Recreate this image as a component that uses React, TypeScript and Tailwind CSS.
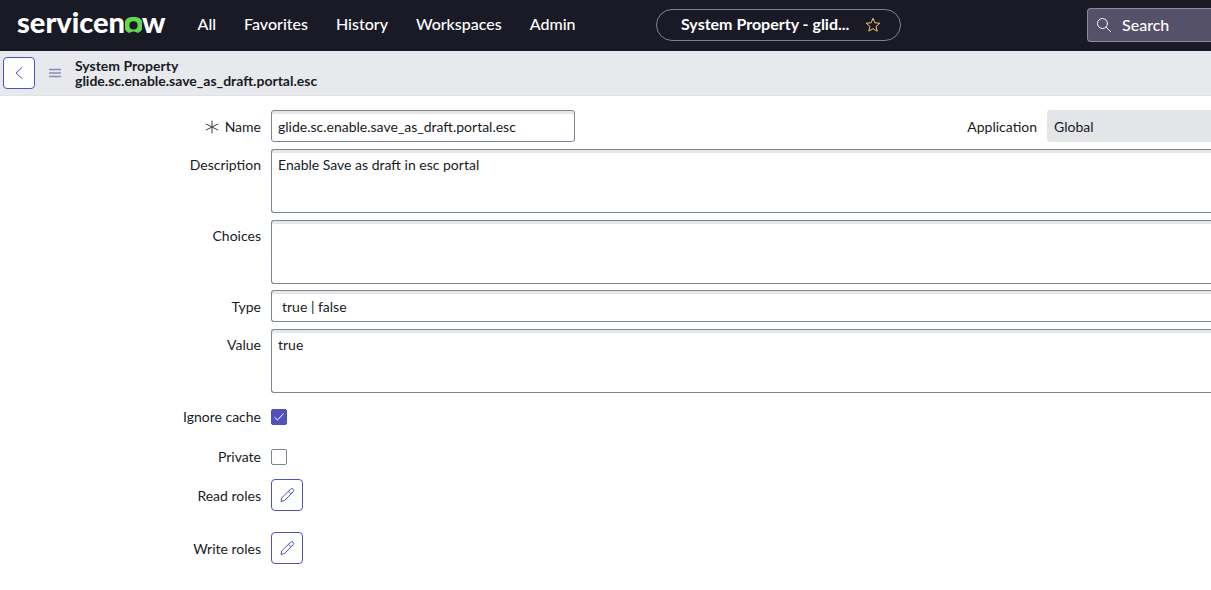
import type { ReactNode } from "react";

const navItems = ["All", "Favorites", "History", "Workspaces", "Admin"];

const fieldStyle =
  "border-[#7c8594] bg-white text-[#181b24] shadow-[inset_0_3px_0_#e6e8e8] outline-none focus:border-[#4f52bd]";

interface FormRowProps {
  label: string;
  htmlFor: string;
  required?: boolean;
  alignTop?: boolean;
  children: ReactNode;
}

function FormRow({ label, htmlFor, required, alignTop, children }: FormRowProps) {
  return (
    <div className="flex items-start gap-2.5">
      <label
        htmlFor={htmlFor}
        className={`flex h-8 w-[261px] shrink-0 items-center justify-end gap-1.5 ${alignTop ? "" : "pt-0.5"}`}
      >
        {required && <AsteriskIcon />}
        {label}
      </label>
      {children}
    </div>
  );
}

function AsteriskIcon() {
  return (
    <svg className="h-3.5 w-3.5" viewBox="0 0 14 14" fill="none" stroke="#3b3f4a" strokeLinecap="round">
      <path d="M7 1v12M1.2 4l11.6 6M1.2 10l11.6-6" />
    </svg>
  );
}

function PencilIcon() {
  return (
    <svg className="h-4 w-4" viewBox="0 0 16 16" fill="none" stroke="#4f52bd" strokeLinejoin="round">
      <path d="M2 14.500l.7-3.500 8.900-8.900a1.700 1.700 0 0 1 2.400 0l.2.2a1.700 1.700 0 0 1 0 2.400L5.400 13.600z" />
      <path d="M10.500 3.200a1.800 1.800 0 0 0 2.600 2.600" strokeWidth=".8" />
    </svg>
  );
}

function Logo() {
  return (
    <a href="#" aria-label="servicenow" className="flex items-baseline pb-1.5 text-[29px] leading-8 font-black text-white">
      servicen
      <svg className="h-4 w-[17px]" viewBox="0 0 17 16">
        <path
          fill="#62d84e"
          d="M8.500 0A8.300 8.300 0 0 0 3.200 15.500c.6.500 1.300.5 1.900.1a6 6 0 0 1 6.800 0c.6.4 1.300.4 1.900-.1A8.300 8.300 0 0 0 8.500 0zM8.500 12.500a4.100 4.100 0 1 1 0-8.200 4.100 4.100 0 0 1 0 8.200z"
        />
      </svg>
      w
    </a>
  );
}

function TopNav() {
  return (
    <header className="flex h-[51px] items-center bg-[#1a1a26] pb-px pl-[17px] text-base text-white">
      <Logo />
      <nav className="ml-8 flex gap-7 pb-0.5">
        {navItems.map((item) => (
          <a key={item} href="#" className="font-medium">
            {item}
          </a>
        ))}
      </nav>
      <div className="mr-[186px] ml-auto flex h-8 w-[245px] items-center justify-between rounded-full border border-[#82828f] pr-[19px] pl-6">
        <span className="pb-0.5 font-bold">System Property - glid...</span>
        <button type="button" aria-label="Add to favorites">
          <svg className="h-4 w-4" viewBox="0 0 16 16" fill="none" stroke="#f3c969" strokeLinejoin="round">
            <path d="M8 1.300l1.900 4.500 4.900.4-3.700 3.200 1.100 4.800L8 11.700l-4.200 2.500 1.100-4.800L1.200 6.200l4.900-.4z" />
          </svg>
        </button>
      </div>
      <label className="flex h-[34px] w-[124px] items-center gap-2.5 rounded-l border border-r-0 border-[#8c8a9c] bg-[#55516a] pl-2">
        <svg className="h-4 w-4 shrink-0" viewBox="0 0 16 16" fill="none" stroke="white" strokeLinecap="round">
          <circle cx="6.500" cy="6.500" r="5" />
          <path d="M10.200 10.200l4.600 4.600" />
        </svg>
        <input
          type="text"
          aria-label="Search"
          placeholder="Search"
          className="w-full min-w-0 bg-transparent font-medium outline-none placeholder:text-white"
        />
      </label>
    </header>
  );
}

function RecordHeader() {
  return (
    <div className="flex h-[45px] items-center border-b border-[#e1e2e6] bg-[#e8e9ed] pl-[3px]">
      <button
        type="button"
        aria-label="Back"
        className="flex h-8 w-8 items-center justify-center rounded border border-[#4f52bd] bg-white"
      >
        <svg className="h-4 w-4" viewBox="0 0 16 16" fill="none" stroke="#4f52bd" strokeLinecap="round">
          <path d="M11 2.500L5 8l6 5.500" />
        </svg>
      </button>
      <button type="button" aria-label="Additional actions" className="ml-3.5">
        <svg className="h-3 w-3" viewBox="0 0 12 12" stroke="#8a8cb4" strokeWidth="1.300">
          <path d="M0 2.500h12M0 6h12M0 9.500h12" />
        </svg>
      </button>
      <h1 className="ml-3.5 text-sm leading-[15px] font-bold text-[#181b24]">
        System Property
        <span className="block">glide.sc.enable.save_as_draft.portal.esc</span>
      </h1>
    </div>
  );
}

function Checkbox({ id, defaultChecked }: { id: string; defaultChecked?: boolean }) {
  return (
    <span className="relative mt-2 h-4 w-4">
      <input
        id={id}
        type="checkbox"
        defaultChecked={defaultChecked}
        className="peer block h-4 w-4 appearance-none rounded-xs border border-[#7c8594] bg-white checked:border-[#4f52bd] checked:bg-[#4f52bd]"
      />
      <svg
        className="pointer-events-none absolute inset-0 hidden h-4 w-4 peer-checked:block"
        viewBox="0 0 16 16"
        fill="none"
        stroke="white"
      >
        <path d="M3.500 8.200l3 2.800 6-6.500" />
      </svg>
    </span>
  );
}

function EditButton({ id, label }: { id: string; label: string }) {
  return (
    <button
      id={id}
      type="button"
      aria-label={label}
      className="flex h-8 w-8 items-center justify-center rounded border border-[#4f52bd] bg-white"
    >
      <PencilIcon />
    </button>
  );
}

function PropertyForm() {
  const areaStyle = `${fieldStyle} block h-16 min-w-0 flex-1 resize-none rounded-l-[3px] border border-r-0 px-1.5 pt-[5px] leading-5`;

  return (
    <form className="pt-3.5 text-sm text-[#181b24]">
      <div className="flex flex-col gap-[7px]">
        <div className="flex justify-between">
          <FormRow label="Name" htmlFor="name" required>
            <input
              id="name"
              type="text"
              defaultValue="glide.sc.enable.save_as_draft.portal.esc"
              className={`${fieldStyle} h-8 w-[304px] rounded-[3px] border px-1.5`}
            />
          </FormRow>
          <div className="flex gap-2.5">
            <label htmlFor="application" className="flex h-8 items-center pt-0.5">
              Application
            </label>
            <input
              id="application"
              type="text"
              readOnly
              defaultValue="Global"
              className="h-8 w-[164px] rounded-l-[3px] bg-[#e4e5e9] px-[7px] outline-none"
            />
          </div>
        </div>
        <FormRow label="Description" htmlFor="description" alignTop>
          <textarea id="description" defaultValue="Enable Save as draft in esc portal" className={areaStyle} />
        </FormRow>
        <FormRow label="Choices" htmlFor="choices" alignTop>
          <textarea id="choices" className={areaStyle} />
        </FormRow>
      </div>

      <div className="mt-1.5 flex flex-col gap-[7px]">
        <FormRow label="Type" htmlFor="type">
          <select
            id="type"
            className={`${fieldStyle} h-8 min-w-0 flex-1 appearance-none rounded-l-[3px] border border-r-0 px-2.5 pt-0.5`}
          >
            <option>true | false</option>
          </select>
        </FormRow>
        <FormRow label="Value" htmlFor="value" alignTop>
          <textarea id="value" defaultValue="true" className={areaStyle} />
        </FormRow>
      </div>

      <div className="mt-2 flex flex-col gap-2">
        <FormRow label="Ignore cache" htmlFor="ignore-cache" alignTop>
          <Checkbox id="ignore-cache" defaultChecked />
        </FormRow>
        <FormRow label="Private" htmlFor="private" alignTop>
          <Checkbox id="private" />
        </FormRow>
      </div>

      <div className="mt-1.5 flex flex-col gap-[21px]">
        <FormRow label="Read roles" htmlFor="read-roles">
          <EditButton id="read-roles" label="Edit read roles" />
        </FormRow>
        <FormRow label="Write roles" htmlFor="write-roles">
          <EditButton id="write-roles" label="Edit write roles" />
        </FormRow>
      </div>
    </form>
  );
}

export default function App() {
  return (
    <div className="min-h-screen bg-white font-['Lato',sans-serif]">
      <TopNav />
      <RecordHeader />
      <PropertyForm />
    </div>
  );
}
